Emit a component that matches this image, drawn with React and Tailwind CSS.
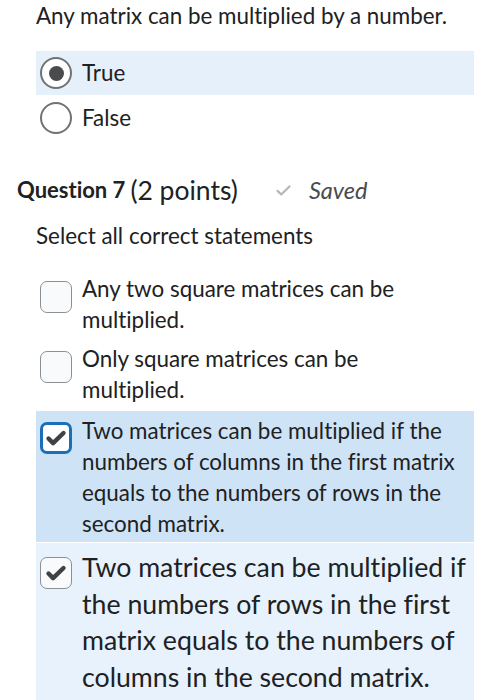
import React from 'react';

const Check = ({ className, width = 3.6 }) => (
    <svg viewBox="0 0 24 24" className={className} fill="none" stroke="currentColor" strokeWidth={width} strokeLinecap="round" strokeLinejoin="round">
        <path d="M4.5 12.5l4.6 4.6L19.5 7" />
    </svg>
);

const Radio = ({ checked }) => (
    <span className="flex h-[32px] w-[32px] shrink-0 items-center justify-center rounded-full border-2 border-[#6e7376] bg-white">
        {checked && <span className="h-[15px] w-[15px] rounded-full bg-[#494c4e]" />}
    </span>
);

const Box = ({ checked, focused }) => (
    <span
        className={`flex h-[32px] w-[32px] shrink-0 items-center justify-center rounded-[7px] ${
            focused ? 'border-[3px] border-[#1a6fb8] bg-white' : 'border-[1.5px] border-[#8c9094] bg-[#f9fafb]'
        }`}
    >
        {checked && <Check className="h-[24px] w-[24px] text-[#3f4244]" width={4.4} />}
    </span>
);

const App = () => {
    return (
        <div
            className="min-h-[700px] bg-white text-[#202122] [font-variant-ligatures:none]"
            style={{ fontFamily: 'Lato, "Noto Sans", sans-serif' }}
        >
            {/* question 6 tail */}
            <div className="pl-[36px] pt-[1px] text-[22.4px] leading-[30px]">Any matrix can be multiplied by a number.</div>

            <div className="mt-[20px] w-[438px] ml-[36px]">
                <div className="flex h-[44px] items-center gap-[10px] bg-[#e6f0fb] pl-[4px] text-[22.4px]">
                    <Radio checked />
                    <span>True</span>
                </div>
                <div className="flex h-[45px] items-center gap-[10px] pl-[4px] text-[22.4px]">
                    <Radio />
                    <span>False</span>
                </div>
            </div>

            {/* question 7 */}
            <div className="mt-[34px] flex items-center pl-[17px] leading-[32px]">
                <span className="text-[22px] font-bold">Question 7</span>
                <span className="ml-[5px] text-[26.5px]">(2 points)</span>
                <Check className="ml-[36px] h-[19px] w-[19px] text-[#b4b6b8]" width={2.8} />
                <span className="ml-[16px] text-[23.5px] italic text-[#494c4e]">Saved</span>
            </div>

            <div className="mt-[15px] pl-[36px] text-[22.4px] leading-[30px]">Select all correct statements</div>

            <div className="mt-[22px] ml-[36px] w-[438px]">
                <div className="flex gap-[10px] pl-[4px]">
                    <span className="mt-[8px]"><Box /></span>
                    <p className="w-[380px] text-[22.4px] leading-[31px]">Any two square matrices can be multiplied.</p>
                </div>
                <div className="mt-[8px] flex gap-[10px] pl-[4px]">
                    <span className="mt-[8px]"><Box /></span>
                    <p className="w-[380px] text-[22.4px] leading-[31px]">Only square matrices can be multiplied.</p>
                </div>

                <div className="mt-[6px] flex gap-[10px] bg-[#cfe3f7] pb-[3px] pl-[4px] pt-[4px]">
                    <span className="mt-[7px]"><Box checked focused /></span>
                    <p className="w-[385px] text-[22.4px] leading-[31px]">
                        Two matrices can be multiplied if the numbers of columns in the first matrix equals to the numbers of rows in the second matrix.
                    </p>
                </div>

                <div className="mt-[1px] flex gap-[10px] bg-[#e8f2fc] pb-[10px] pl-[4px] pt-[6px]">
                    <span className="mt-[8px]"><Box checked /></span>
                    <p className="w-[390px] text-[26.7px] leading-[36.5px]">
                        Two matrices can be multiplied if the numbers of rows in the first matrix equals to the numbers of columns in the second matrix.
                    </p>
                </div>
            </div>
        </div>
    );
};

export default App;
